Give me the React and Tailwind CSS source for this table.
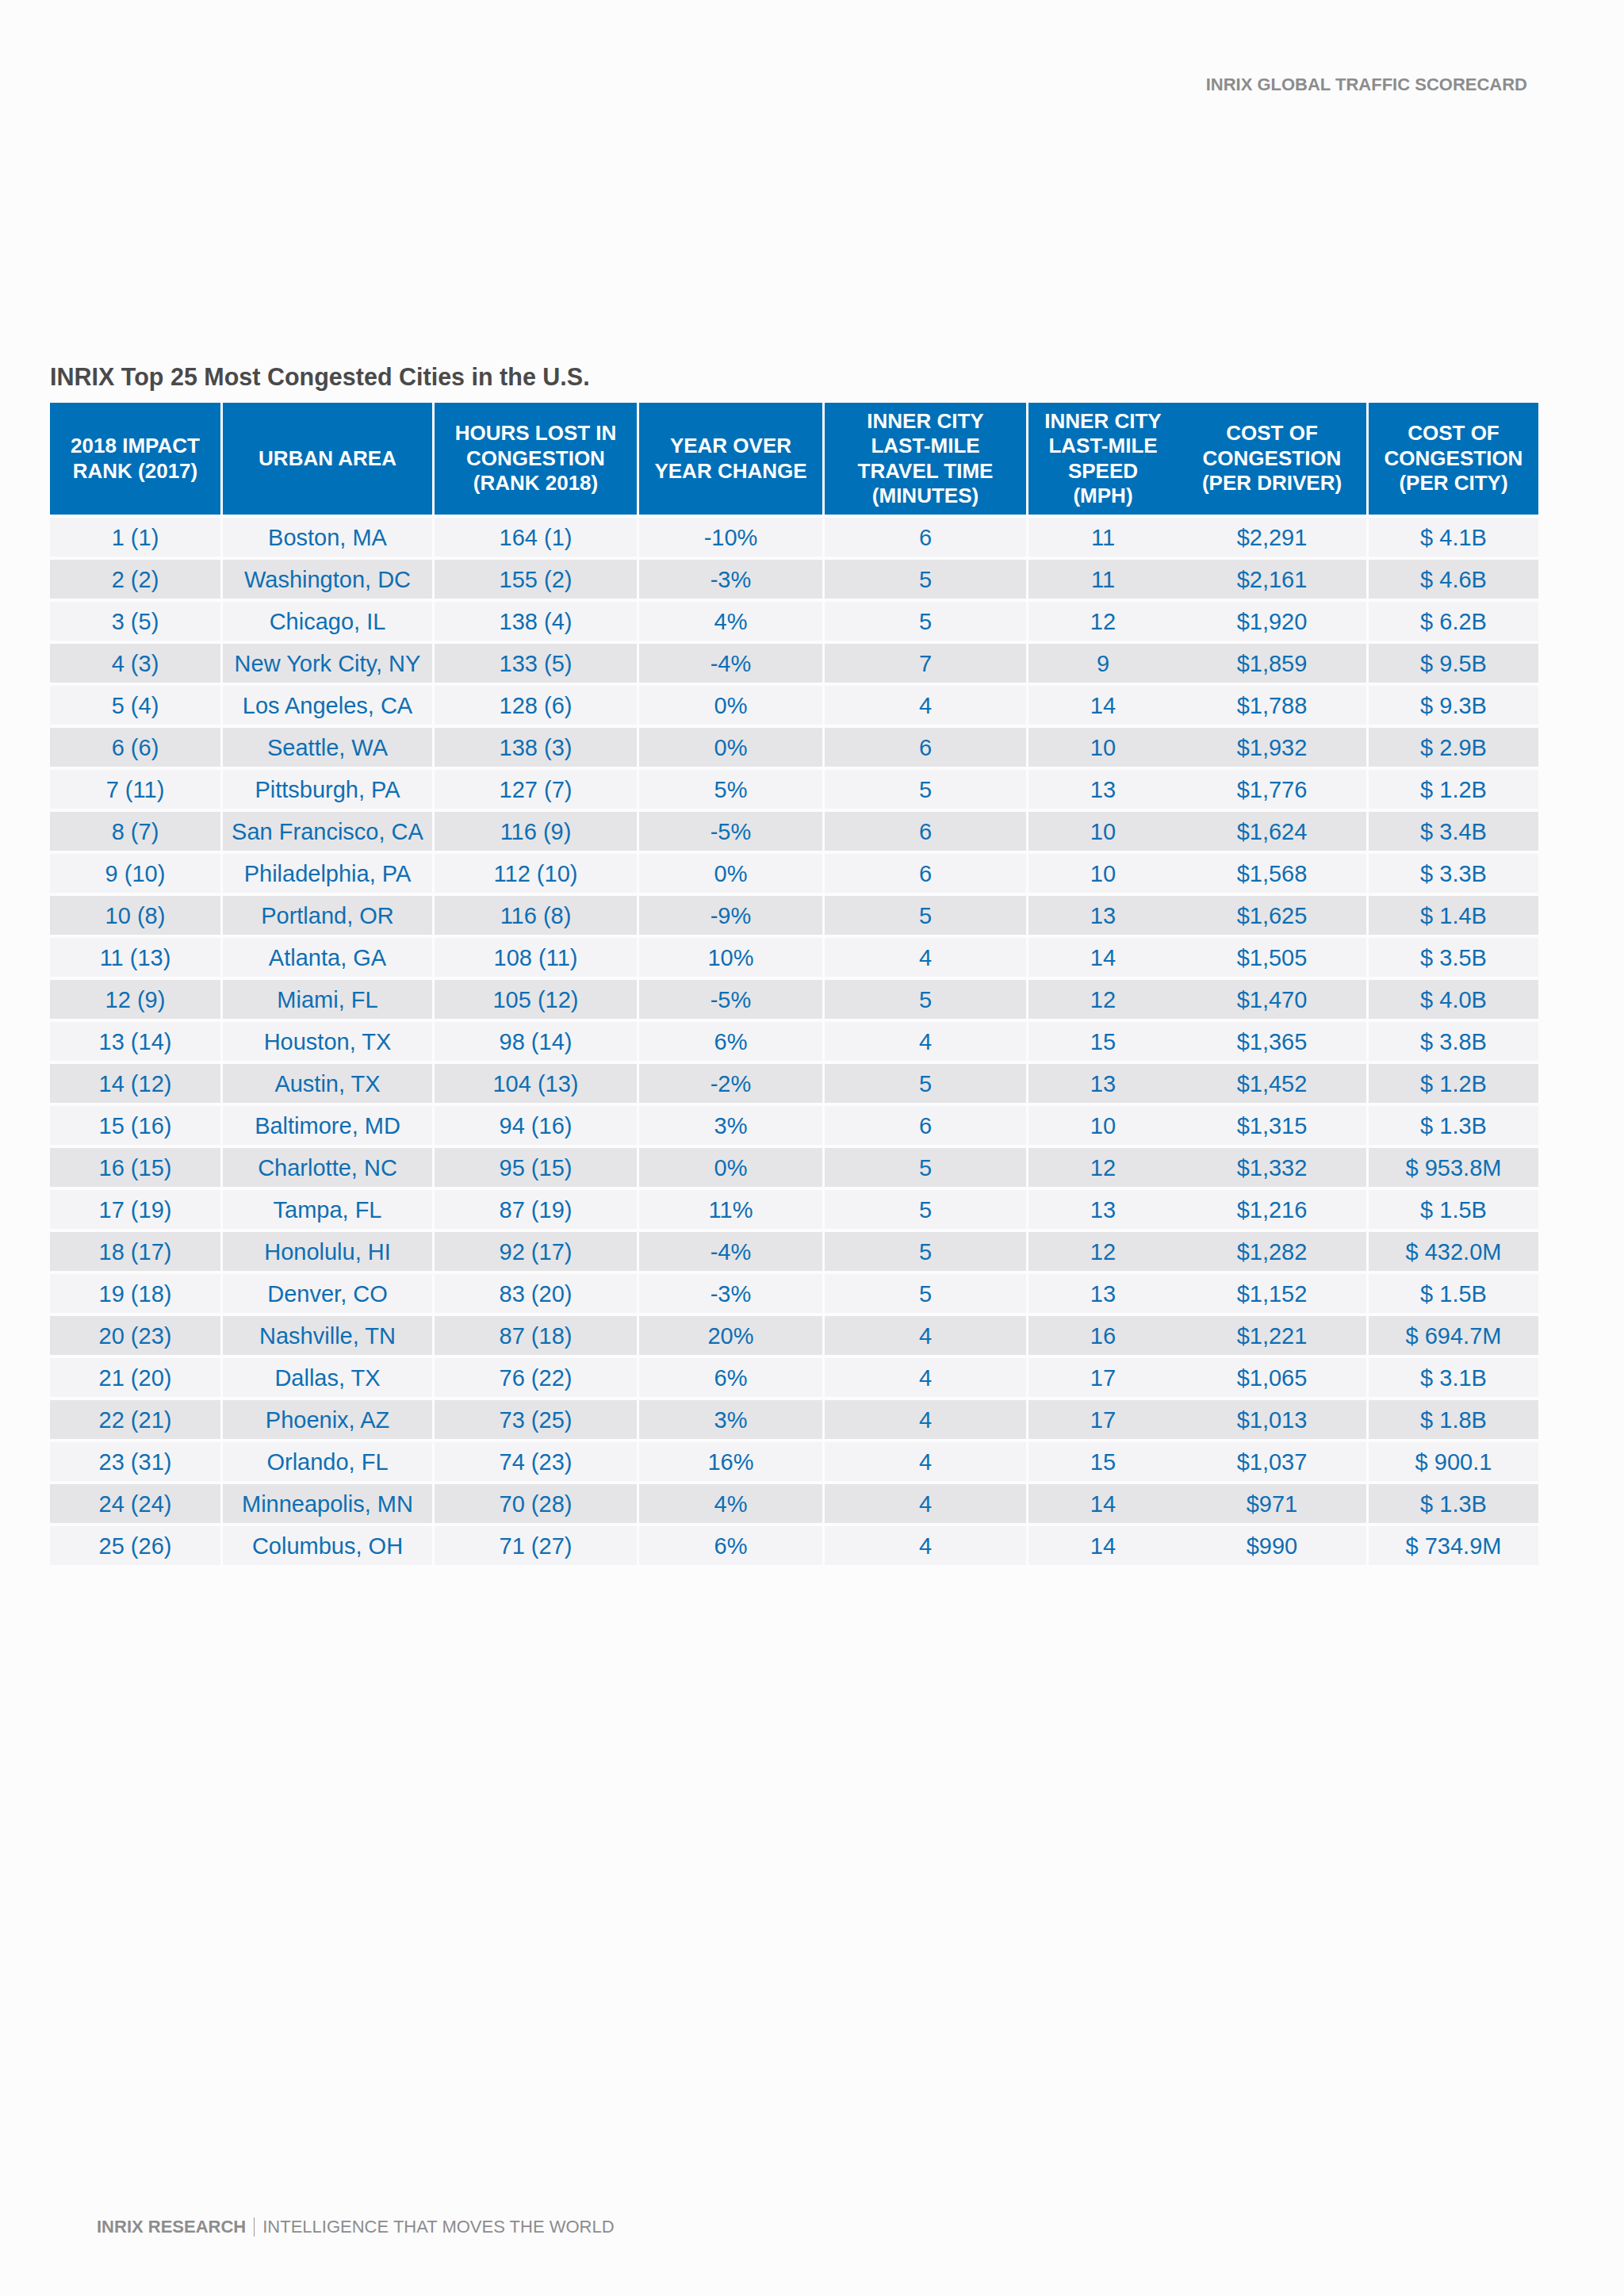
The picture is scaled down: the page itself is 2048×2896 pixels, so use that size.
import React from "react";

const rows = [
  ["1 (1)", "Boston, MA", "164 (1)", "-10%", "6", "11", "$2,291", "$ 4.1B"],
  ["2 (2)", "Washington, DC", "155 (2)", "-3%", "5", "11", "$2,161", "$ 4.6B"],
  ["3 (5)", "Chicago, IL", "138 (4)", "4%", "5", "12", "$1,920", "$ 6.2B"],
  ["4 (3)", "New York City, NY", "133 (5)", "-4%", "7", "9", "$1,859", "$ 9.5B"],
  ["5 (4)", "Los Angeles, CA", "128 (6)", "0%", "4", "14", "$1,788", "$ 9.3B"],
  ["6 (6)", "Seattle, WA", "138 (3)", "0%", "6", "10", "$1,932", "$ 2.9B"],
  ["7 (11)", "Pittsburgh, PA", "127 (7)", "5%", "5", "13", "$1,776", "$ 1.2B"],
  ["8 (7)", "San Francisco, CA", "116 (9)", "-5%", "6", "10", "$1,624", "$ 3.4B"],
  ["9 (10)", "Philadelphia, PA", "112 (10)", "0%", "6", "10", "$1,568", "$ 3.3B"],
  ["10 (8)", "Portland, OR", "116 (8)", "-9%", "5", "13", "$1,625", "$ 1.4B"],
  ["11 (13)", "Atlanta, GA", "108 (11)", "10%", "4", "14", "$1,505", "$ 3.5B"],
  ["12 (9)", "Miami, FL", "105 (12)", "-5%", "5", "12", "$1,470", "$ 4.0B"],
  ["13 (14)", "Houston, TX", "98 (14)", "6%", "4", "15", "$1,365", "$ 3.8B"],
  ["14 (12)", "Austin, TX", "104 (13)", "-2%", "5", "13", "$1,452", "$ 1.2B"],
  ["15 (16)", "Baltimore, MD", "94 (16)", "3%", "6", "10", "$1,315", "$ 1.3B"],
  ["16 (15)", "Charlotte, NC", "95 (15)", "0%", "5", "12", "$1,332", "$ 953.8M"],
  ["17 (19)", "Tampa, FL", "87 (19)", "11%", "5", "13", "$1,216", "$ 1.5B"],
  ["18 (17)", "Honolulu, HI", "92 (17)", "-4%", "5", "12", "$1,282", "$ 432.0M"],
  ["19 (18)", "Denver, CO", "83 (20)", "-3%", "5", "13", "$1,152", "$ 1.5B"],
  ["20 (23)", "Nashville, TN", "87 (18)", "20%", "4", "16", "$1,221", "$ 694.7M"],
  ["21 (20)", "Dallas, TX", "76 (22)", "6%", "4", "17", "$1,065", "$ 3.1B"],
  ["22 (21)", "Phoenix, AZ", "73 (25)", "3%", "4", "17", "$1,013", "$ 1.8B"],
  ["23 (31)", "Orlando, FL", "74 (23)", "16%", "4", "15", "$1,037", "$ 900.1"],
  ["24 (24)", "Minneapolis, MN", "70 (28)", "4%", "4", "14", "$971", "$ 1.3B"],
  ["25 (26)", "Columbus, OH", "71 (27)", "6%", "4", "14", "$990", "$ 734.9M"],
];

const headers = [
  ["2018 IMPACT", "RANK (2017)"],
  ["URBAN AREA"],
  ["HOURS LOST IN", "CONGESTION", "(RANK 2018)"],
  ["YEAR OVER", "YEAR CHANGE"],
  ["INNER CITY", "LAST-MILE", "TRAVEL TIME", "(MINUTES)"],
];

function HeadText({ lines }) {
  return (
    <div className="flex flex-col items-center justify-center text-center">
      {lines.map((l, i) => (
        <span key={i} className="block whitespace-nowrap">
          {l}
        </span>
      ))}
    </div>
  );
}

export default function App() {
  return (
    <div
      className="w-[2048px] h-[2896px] bg-[#fcfcfd] flex flex-col"
      style={{ fontFamily: '"Liberation Sans", Arial, sans-serif' }}
    >
      <div className="pt-[94px] pr-[122px] flex justify-end">
        <span className="text-[22px] leading-[26px] font-bold text-[#8c8c8c]">
          INRIX GLOBAL TRAFFIC SCORECARD
        </span>
      </div>

      <div className="mt-[337px] pl-[63px]">
        <h1 className="text-[30.5px] leading-[36px] font-bold text-[#4a4a4a]">
          INRIX Top 25 Most Congested Cities in the U.S.
        </h1>
      </div>

      <div className="mt-[15px] ml-[63px] grid grid-cols-[215px_264px_255px_231px_254px_426px_214px] gap-x-[3px] gap-y-[4px]">
        {headers.map((h, i) => (
          <div
            key={i}
            className="h-[141px] bg-[#0070b8] text-white font-bold text-[26px] leading-[31.5px] flex items-center justify-center"
          >
            <HeadText lines={h} />
          </div>
        ))}
        <div className="h-[141px] bg-[#0070b8] text-white font-bold text-[26px] leading-[31.5px] flex">
          <div className="w-[188px] flex items-center justify-center">
            <HeadText lines={["INNER CITY", "LAST-MILE", "SPEED", "(MPH)"]} />
          </div>
          <div className="w-[238px] flex items-center justify-center">
            <HeadText lines={["COST OF", "CONGESTION", "(PER DRIVER)"]} />
          </div>
        </div>
        <div className="h-[141px] bg-[#0070b8] text-white font-bold text-[26px] leading-[31.5px] flex items-center justify-center">
          <HeadText lines={["COST OF", "CONGESTION", "(PER CITY)"]} />
        </div>

        {rows.map((r, ri) => {
          const bg = ri % 2 === 0 ? "bg-[#f4f4f6]" : "bg-[#e5e5e8]";
          const cell = `${bg} h-[49px] pt-[2px] flex items-center justify-center text-[29px] text-[#0f6eb3] whitespace-nowrap`;
          return (
            <React.Fragment key={ri}>
              <div className={cell}>{r[0]}</div>
              <div className={cell}>{r[1]}</div>
              <div className={cell}>{r[2]}</div>
              <div className={cell}>{r[3]}</div>
              <div className={cell}>{r[4]}</div>
              <div className={`${bg} h-[49px] pt-[2px] flex text-[29px] text-[#0f6eb3] whitespace-nowrap`}>
                <div className="w-[188px] flex items-center justify-center">{r[5]}</div>
                <div className="w-[238px] flex items-center justify-center">{r[6]}</div>
              </div>
              <div className={cell}>{r[7]}</div>
            </React.Fragment>
          );
        })}
      </div>

      <div className="mt-auto mb-[74px] pl-[122px] flex items-center text-[22px] leading-[26px] text-[#8c8c8c]">
        <span className="font-bold">INRIX RESEARCH</span>
        <span className="mx-[10px] inline-block w-[1px] h-[24px] bg-[#9a9a9a]"></span>
        <span>INTELLIGENCE THAT MOVES THE WORLD</span>
      </div>
    </div>
  );
}
